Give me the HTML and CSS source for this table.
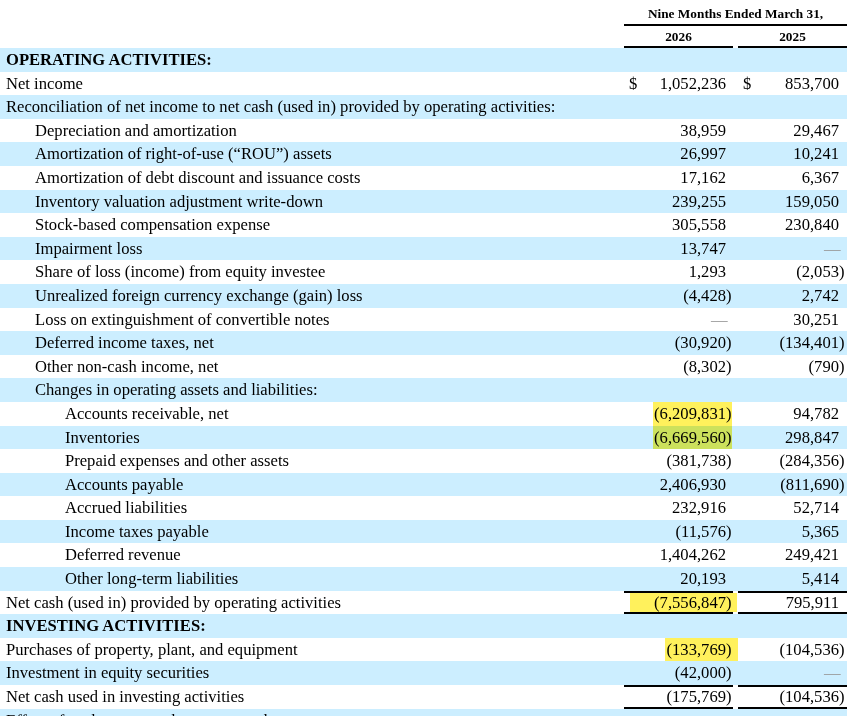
FILE: index.html
```html
<!DOCTYPE html>
<html lang="en">

<head>
    <meta charset="UTF-8">
    <title>Condensed Consolidated Statements of Cash Flows</title>
    <link rel="stylesheet" href="styles.css">
</head>

<body>
    <table class="cash-flow">
        <colgroup>
            <col class="col-label">
            <col class="col-amt">
            <col class="col-gap">
            <col class="col-amt">
        </colgroup>
        <thead>
            <tr>
                <th></th>
                <th class="period" colspan="3">Nine Months Ended March 31,</th>
            </tr>
            <tr>
                <th></th>
                <th class="year">2026</th>
                <th class="gap"></th>
                <th class="year">2025</th>
            </tr>
        </thead>
        <tbody>
            <tr class="band">
                <td class="label section">OPERATING ACTIVITIES:</td>
                <td class="amt"></td><td class="gap"></td><td class="amt last"></td>
            </tr>
            <tr>
                <td class="label">Net income</td>
                <td class="amt"><span class="cur">$</span>1,052,236</td><td class="gap"></td>
                <td class="amt last"><span class="cur">$</span>853,700</td>
            </tr>
            <tr class="band">
                <td class="label">Reconciliation of net income to net cash (used in) provided by operating activities:</td>
                <td class="amt"></td><td class="gap"></td><td class="amt last"></td>
            </tr>
            <tr>
                <td class="label l1">Depreciation and amortization</td>
                <td class="amt">38,959</td><td class="gap"></td><td class="amt last">29,467</td>
            </tr>
            <tr class="band">
                <td class="label l1">Amortization of right-of-use (“ROU”) assets</td>
                <td class="amt">26,997</td><td class="gap"></td><td class="amt last">10,241</td>
            </tr>
            <tr>
                <td class="label l1">Amortization of debt discount and issuance costs</td>
                <td class="amt">17,162</td><td class="gap"></td><td class="amt last">6,367</td>
            </tr>
            <tr class="band">
                <td class="label l1">Inventory valuation adjustment write-down</td>
                <td class="amt">239,255</td><td class="gap"></td><td class="amt last">159,050</td>
            </tr>
            <tr>
                <td class="label l1">Stock-based compensation expense</td>
                <td class="amt">305,558</td><td class="gap"></td><td class="amt last">230,840</td>
            </tr>
            <tr class="band">
                <td class="label l1">Impairment loss</td>
                <td class="amt">13,747</td><td class="gap"></td><td class="amt last"><span class="nil">—</span></td>
            </tr>
            <tr>
                <td class="label l1">Share of loss (income) from equity investee</td>
                <td class="amt">1,293</td><td class="gap"></td><td class="amt last"><span class="neg">(2,053)</span></td>
            </tr>
            <tr class="band">
                <td class="label l1">Unrealized foreign currency exchange (gain) loss</td>
                <td class="amt"><span class="neg">(4,428)</span></td><td class="gap"></td><td class="amt last">2,742</td>
            </tr>
            <tr>
                <td class="label l1">Loss on extinguishment of convertible notes</td>
                <td class="amt"><span class="nil">—</span></td><td class="gap"></td><td class="amt last">30,251</td>
            </tr>
            <tr class="band">
                <td class="label l1">Deferred income taxes, net</td>
                <td class="amt"><span class="neg">(30,920)</span></td><td class="gap"></td>
                <td class="amt last"><span class="neg">(134,401)</span></td>
            </tr>
            <tr>
                <td class="label l1">Other non-cash income, net</td>
                <td class="amt"><span class="neg">(8,302)</span></td><td class="gap"></td>
                <td class="amt last"><span class="neg">(790)</span></td>
            </tr>
            <tr class="band">
                <td class="label l1">Changes in operating assets and liabilities:</td>
                <td class="amt"></td><td class="gap"></td><td class="amt last"></td>
            </tr>
            <tr>
                <td class="label l2">Accounts receivable, net</td>
                <td class="amt"><span class="neg hl">(6,209,831)</span></td><td class="gap"></td>
                <td class="amt last">94,782</td>
            </tr>
            <tr class="band">
                <td class="label l2">Inventories</td>
                <td class="amt"><span class="neg hl">(6,669,560)</span></td><td class="gap"></td>
                <td class="amt last">298,847</td>
            </tr>
            <tr>
                <td class="label l2">Prepaid expenses and other assets</td>
                <td class="amt"><span class="neg">(381,738)</span></td><td class="gap"></td>
                <td class="amt last"><span class="neg">(284,356)</span></td>
            </tr>
            <tr class="band">
                <td class="label l2">Accounts payable</td>
                <td class="amt">2,406,930</td><td class="gap"></td>
                <td class="amt last"><span class="neg">(811,690)</span></td>
            </tr>
            <tr>
                <td class="label l2">Accrued liabilities</td>
                <td class="amt">232,916</td><td class="gap"></td><td class="amt last">52,714</td>
            </tr>
            <tr class="band">
                <td class="label l2">Income taxes payable</td>
                <td class="amt"><span class="neg">(11,576)</span></td><td class="gap"></td><td class="amt last">5,365</td>
            </tr>
            <tr>
                <td class="label l2">Deferred revenue</td>
                <td class="amt">1,404,262</td><td class="gap"></td><td class="amt last">249,421</td>
            </tr>
            <tr class="band">
                <td class="label l2">Other long-term liabilities</td>
                <td class="amt">20,193</td><td class="gap"></td><td class="amt last">5,414</td>
            </tr>
            <tr class="total">
                <td class="label">Net cash (used in) provided by operating activities</td>
                <td class="amt"><span class="neg hl hl-wide">(7,556,847)</span></td><td class="gap"></td>
                <td class="amt last">795,911</td>
            </tr>
            <tr class="band">
                <td class="label section">INVESTING ACTIVITIES:</td>
                <td class="amt"></td><td class="gap"></td><td class="amt last"></td>
            </tr>
            <tr>
                <td class="label">Purchases of property, plant, and equipment</td>
                <td class="amt"><span class="neg hl hl-right">(133,769)</span></td><td class="gap"></td>
                <td class="amt last"><span class="neg">(104,536)</span></td>
            </tr>
            <tr class="band">
                <td class="label">Investment in equity securities</td>
                <td class="amt"><span class="neg">(42,000)</span></td><td class="gap"></td>
                <td class="amt last"><span class="nil">—</span></td>
            </tr>
            <tr class="total">
                <td class="label">Net cash used in investing activities</td>
                <td class="amt"><span class="neg">(175,769)</span></td><td class="gap"></td>
                <td class="amt last"><span class="neg">(104,536)</span></td>
            </tr>
            <tr class="band">
                <td class="label">Effect of exchange rate changes on cash</td>
                <td class="amt"></td><td class="gap"></td><td class="amt last"></td>
            </tr>
        </tbody>
    </table>
</body>

</html>
```

FILE: styles.css
```css
body {
    margin: 0;
    padding: 0;
    background-color: #fff;
    color: #000;
    font-family: "Liberation Serif", "Times New Roman", serif;
}

.cash-flow {
    width: 847px;
    table-layout: fixed;
    border-collapse: separate;
    border-spacing: 0;
    font-size: 16.6px;
}

.col-label {
    width: 624px;
}

.col-amt {
    width: 109px;
}

.col-gap {
    width: 5px;
}

.cash-flow th {
    padding: 0;
    font-size: 13.3px;
    font-weight: bold;
    line-height: 16px;
    text-align: center;
}

.cash-flow th.period {
    padding: 6px 0 2px;
    border-bottom: 2px solid #000;
}

.cash-flow th.year {
    padding: 3px 0 1px;
    border-bottom: 2px solid #000;
}

.cash-flow td {
    padding: 0;
    line-height: 23.6px;
    white-space: nowrap;
    vertical-align: middle;
}

.band td {
    background-color: #cceeff;
}

.label {
    padding-left: 6px !important;
}

.label.l1 {
    padding-left: 35px !important;
}

.label.l2 {
    padding-left: 65px !important;
}

.section {
    font-weight: bold;
}

.amt {
    text-align: right;
    padding: 0 7px 0 5px !important;
}

.amt.last {
    padding-right: 8px !important;
}

.total .amt {
    line-height: 19.6px !important;
    border-top: 2px solid #000;
    border-bottom: 2px solid #000;
}

.cur {
    float: left;
}

.neg {
    margin-right: -0.333em;
}

.nil {
    color: #999;
    margin-right: -1.5px;
}

/* reviewer's highlighter marks */
.hl {
    display: inline-block;
    vertical-align: top;
    padding-left: 1px;
    background-color: #fff15c;
    mix-blend-mode: multiply;
}

.hl-wide {
    padding-left: 24px;
    padding-right: 5px;
    margin-right: calc(-0.333em - 5px);
}

.hl-right {
    padding-left: 2px;
    padding-right: 6px;
    margin-right: calc(-0.333em - 6px);
}
```
